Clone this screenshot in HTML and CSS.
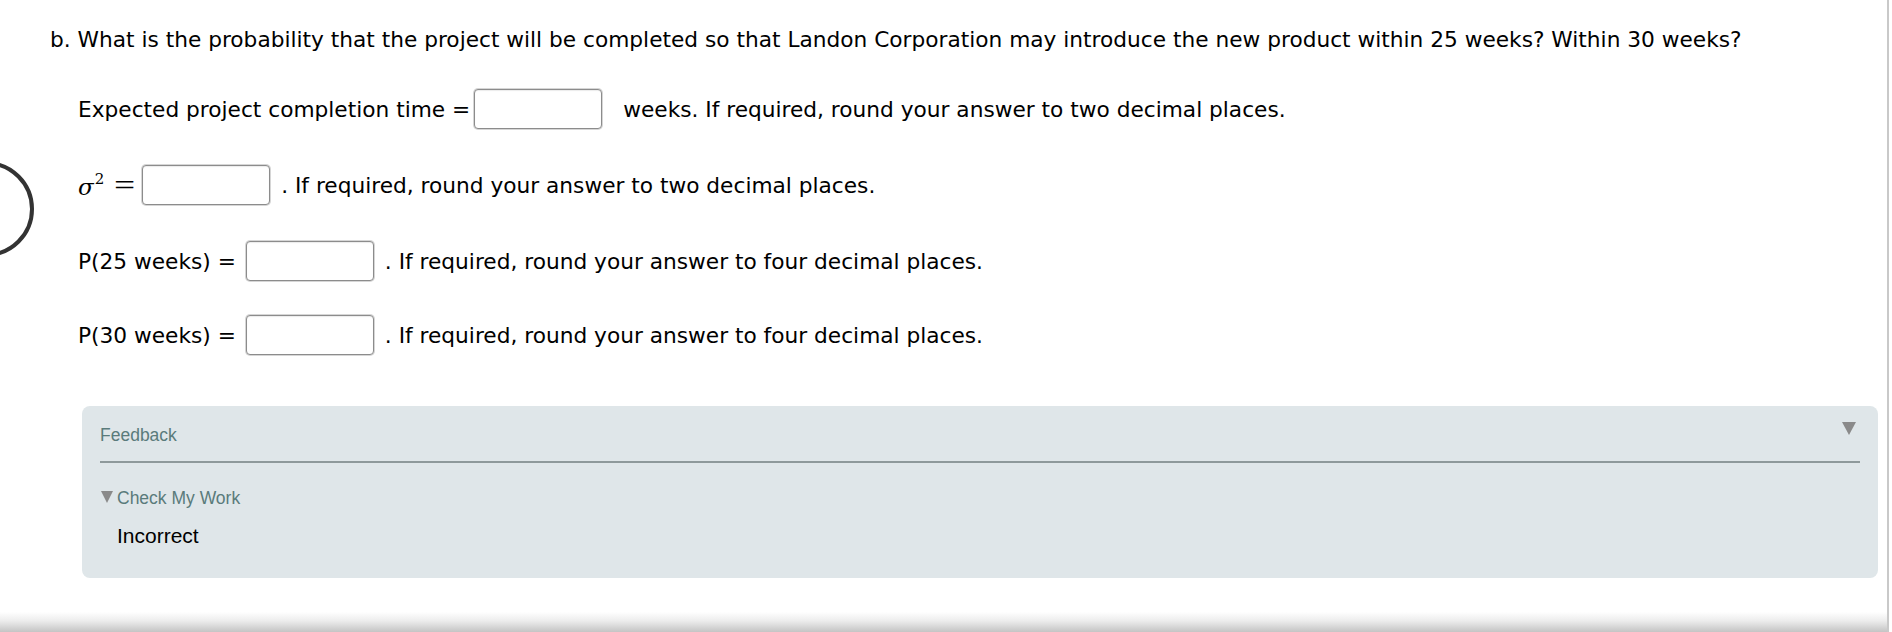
FILE: index.html
```html
<!DOCTYPE html>
<html>
<head>
<meta charset="utf-8">
<link rel="stylesheet" href="styles.css">
</head>
<body>
<div class="page">
  <div class="marker"></div>
  <p class="question">b. What is the probability that the project will be completed so that Landon Corporation may introduce the new product within 25 weeks? Within 30 weeks?</p>
  <div class="rows">
    <div class="row">
      <span class="label tight">Expected project completion time =</span>
      <input class="answer" type="text">
      <span class="after wide">weeks. If required, round your answer to two decimal places.</span>
    </div>
    <div class="row">
      <span class="math"><span class="sigma">σ</span><sup class="sup">2</sup><span class="eq">=</span></span>
      <input class="answer" type="text">
      <span class="after">. If required, round your answer to two decimal places.</span>
    </div>
    <div class="row">
      <span class="label">P(25 weeks) =</span>
      <input class="answer" type="text">
      <span class="after">. If required, round your answer to four decimal places.</span>
    </div>
    <div class="row last">
      <span class="label">P(30 weeks) =</span>
      <input class="answer" type="text">
      <span class="after">. If required, round your answer to four decimal places.</span>
    </div>
  </div>
  <div class="feedback">
    <div class="fb-head">
      <span class="fb-title">Feedback</span>
      <span class="fb-toggle"></span>
    </div>
    <div class="fb-body">
      <div class="check"><span class="check-tri"></span>Check My Work</div>
      <div class="result">Incorrect</div>
    </div>
  </div>
  <div class="bottom-shade"></div>
</div>
</body>
</html>
```

FILE: styles.css
```css
html, body {
  margin: 0;
  padding: 0;
  background: #ffffff;
}

body {
  width: 1892px;
  height: 632px;
  overflow: hidden;
  font-family: "DejaVu Sans", Verdana, sans-serif;
  color: #000;
}

.page {
  position: relative;
  width: 1889px;
  height: 632px;
  border-right: 2px solid #c9c9c9;
  box-sizing: border-box;
  display: flex;
  flex-direction: column;
}

.marker {
  position: absolute;
  left: -62px;
  top: 161px;
  width: 88px;
  height: 88px;
  border: 4px solid #333333;
  border-radius: 50%;
}

.question {
  margin: 0;
  padding: 26px 0 0 50px;
  font-size: 21.7px;
  line-height: 28px;
  white-space: nowrap;
}

.rows {
  display: flex;
  flex-direction: column;
  gap: 36px;
  padding: 35px 0 0 78px;
}

.row {
  display: flex;
  align-items: center;
  height: 40px;
  font-size: 21.7px;
  white-space: nowrap;
}

.row.last {
  margin-top: -2px;
}

.label {
  margin-right: 10px;
}

.label.tight {
  margin-right: 4px;
}

.answer {
  width: 128px;
  height: 40px;
  box-sizing: border-box;
  border: 1px solid #8c8c8c;
  border-radius: 4px;
  box-shadow: 0 0 0 1px #d6d6d6, inset 0 1px 1px rgba(0,0,0,0.08);
  background: #fff;
  margin: 0;
  padding: 0;
}

.after {
  margin-left: 11px;
}

.after.wide {
  margin-left: 21px;
}

.math {
  display: flex;
  align-items: baseline;
  font-family: "DejaVu Serif", "Liberation Serif", serif;
  margin-right: 9px;
}

.sigma {
  font-style: italic;
  font-size: 23px;
}

.sup {
  font-size: 15px;
  position: relative;
  top: -11px;
  vertical-align: baseline;
  margin-left: 1px;
}

.eq {
  font-family: "Liberation Serif", serif;
  font-size: 30px;
  margin-left: 12px;
  transform: scaleX(1.25);
}

.feedback {
  margin: 51px 0 0 82px;
  width: 1796px;
  height: 172px;
  box-sizing: border-box;
  background: #dfe6e9;
  border-radius: 8px;
  padding: 0 18px;
  font-family: "Liberation Sans", Arial, sans-serif;
}

.fb-head {
  position: relative;
  height: 57px;
  border-bottom: 2px solid #8e999b;
  box-sizing: border-box;
  padding-top: 19px;
}

.fb-title {
  font-size: 17.5px;
  line-height: 20px;
  color: #5a7b7b;
}

.fb-toggle {
  position: absolute;
  right: 4px;
  top: 16px;
  width: 0;
  height: 0;
  border-left: 7px solid transparent;
  border-right: 7px solid transparent;
  border-top: 13px solid #8a8a8a;
}

.fb-body {
  padding-top: 25px;
}

.check {
  display: flex;
  align-items: center;
  font-size: 17.5px;
  line-height: 20px;
  color: #5a7b7b;
}

.check-tri {
  width: 0;
  height: 0;
  border-left: 6px solid transparent;
  border-right: 6px solid transparent;
  border-top: 12px solid #8a8a8a;
  margin: 0 4px 2px 1px;
}

.result {
  padding-left: 17px;
  margin-top: 16px;
  font-size: 21px;
  line-height: 24px;
  color: #000;
}

.bottom-shade {
  position: absolute;
  left: 0;
  right: 0;
  bottom: 0;
  height: 20px;
  background: linear-gradient(to bottom, rgba(255,255,255,0) 0%, #ececec 45%, #c4c4c4 100%);
}
```
